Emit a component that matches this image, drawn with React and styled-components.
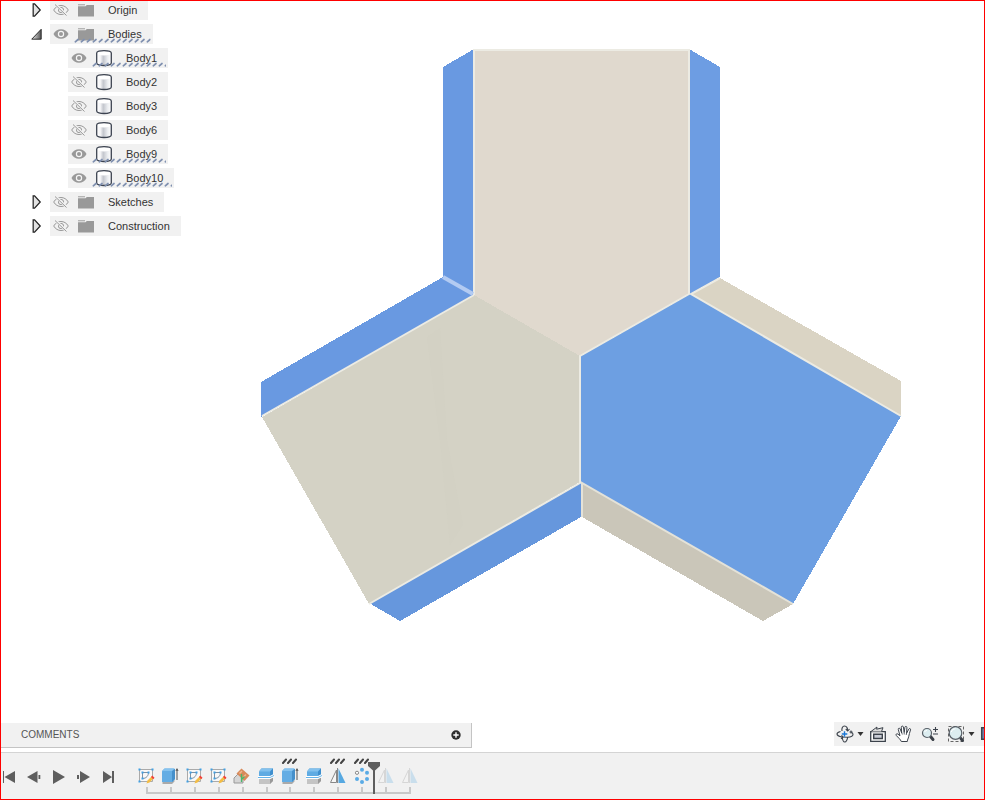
import React from "react";
import styled, { createGlobalStyle } from "styled-components";

const GlobalStyle = createGlobalStyle`
  * { box-sizing: border-box; }
  body { margin: 0; background: #fff; font-family: "Liberation Sans", Arial, sans-serif; font-size: 11px; color: #333; }
  svg { display: block; }
`;

const Window = styled.div`
  display: flex;
  flex-direction: column;
  min-height: 100vh;
  border: 1px solid #f00;
  overflow: hidden;
`;

const Workspace = styled.main`
  flex: 1;
  display: flex;
  min-height: 0;
`;

const IconButton = styled.button`
  display: flex;
  align-items: center;
  justify-content: center;
  flex: none;
  width: ${(p) => p.$w || 16}px;
  height: ${(p) => p.$h || 16}px;
  padding: 0;
  border: 0;
  background: none;
`;

/* ---------- Browser tree ---------- */

const Tree = styled.ul`
  flex: none;
  display: flex;
  flex-direction: column;
  gap: 4px;
  width: 200px;
  margin: -1px 0 0;
  padding: 0 0 0 27px;
  list-style: none;
`;

const TreeRow = styled.li`
  display: flex;
  align-items: center;
  height: 20px;
  padding-left: ${(p) => (p.$child ? 40 : 0)}px;
`;

const TreeCell = styled.div`
  position: relative;
  display: flex;
  align-items: center;
  gap: 8px;
  height: 20px;
  margin-left: ${(p) => (p.$child ? 0 : 6)}px;
  padding: 0 11px 0 3px;
  background: #f1f1f1;
`;

const TreeLabel = styled.span`
  margin-left: 5px;
  line-height: 20px;
  white-space: nowrap;
`;

const HatchLine = styled.svg`
  position: absolute;
  left: 24px;
  bottom: 0;
  width: calc(100% - 26px);
  height: 6px;
`;

function Hatch() {
  const id = React.useId();
  return (
    <HatchLine aria-hidden="true">
      <defs>
        <pattern id={id} width="6" height="6" patternUnits="userSpaceOnUse">
          <path d="M1.300 3.800 4 1.500" stroke="#7f90b0" strokeWidth="1.700" strokeLinecap="round" />
        </pattern>
      </defs>
      <rect width="100%" height="6" fill={`url(#${id})`} />
    </HatchLine>
  );
}

function Disclosure({ open }) {
  return (
    <svg width="17" height="16" viewBox="0 0 17 16">
      <defs>
        <linearGradient id="open-shade" x1="0" x2="1">
          <stop offset="0" stopColor="#eee" />
          <stop offset="1" stopColor="#555" />
        </linearGradient>
      </defs>
      {open ? (
        <path d="M4 13.500 14 3v10.500Z" fill="url(#open-shade)" stroke="#222" />
      ) : (
        <path d="M5.500 1.500H7l6 6.500-6 6.500H5.500Z" fill="#e2e2e2" stroke="#222" strokeWidth="1.300" />
      )}
    </svg>
  );
}

function Eye({ shown }) {
  return shown ? (
    <svg width="16" height="12" viewBox="0 0 16 12">
      <path d="M0.500 6C3 -0.300 13 -0.300 15.500 6 13 12.300 3 12.300 0.500 6Z" fill="#999" />
      <circle cx="8" cy="6" r="3.200" fill="#f5f5f5" />
      <circle cx="8" cy="6" r="2" fill="#999" />
    </svg>
  ) : (
    <svg width="16" height="12" viewBox="0 0 16 12" fill="none" stroke="#999">
      <path d="M0.700 6C4 0 12 0 15.300 6 12 12 4 12 0.700 6Z" />
      <circle cx="8" cy="6" r="2.600" />
      <path d="M2.500 0.500 14 11.500" stroke="#f1f1f1" strokeWidth="2.500" />
      <path d="M2 0.500 13.500 11.500" />
    </svg>
  );
}

function Folder() {
  return (
    <svg width="18" height="16" viewBox="0 0 18 16">
      <path d="M1 2h7v1.400H1Z" fill="#b5b5b5" />
      <path d="M1 4.200h7.500L9.800 3H17v11.500H1Z" fill="#999" />
    </svg>
  );
}

function BodyIcon() {
  return (
    <svg width="18" height="18" viewBox="0 0 18 18">
      <defs>
        <linearGradient id="cyl" x1="0" x2="1">
          <stop offset="0" stopColor="#fff" />
          <stop offset="0.250" stopColor="#f5f5f7" />
          <stop offset="0.450" stopColor="#c3c6cd" />
          <stop offset="0.750" stopColor="#eceef1" />
          <stop offset="1" stopColor="#fff" />
        </linearGradient>
      </defs>
      <path d="M1.700 4v10c0 3.300 14.600 3.300 14.600 0V4" fill="url(#cyl)" />
      <ellipse cx="9" cy="4" rx="7.300" ry="2.500" fill="#fff" />
      <path d="M1.700 4c0-3.300 14.600-3.300 14.600 0v10c0 3.300-14.600 3.300-14.600 0Z" fill="none" stroke="#3c4350" strokeWidth="1.300" />
    </svg>
  );
}

const NODES = [
  { name: "Origin", folder: true },
  { name: "Bodies", folder: true, open: true, shown: true, marked: true },
  { name: "Body1", shown: true, marked: true },
  { name: "Body2" },
  { name: "Body3" },
  { name: "Body6" },
  { name: "Body9", shown: true, marked: true },
  { name: "Body10", shown: true, marked: true },
  { name: "Sketches", folder: true },
  { name: "Construction", folder: true },
];

function TreeNode({ node }) {
  const child = !node.folder;
  return (
    <TreeRow $child={child}>
      {node.folder && (
        <IconButton $w={16} aria-label={`Toggle ${node.name}`} aria-expanded={!!node.open}>
          <Disclosure open={node.open} />
        </IconButton>
      )}
      <TreeCell $child={child}>
        <IconButton aria-label={`Visibility of ${node.name}`} aria-pressed={!!node.shown}>
          <Eye shown={node.shown} />
        </IconButton>
        {node.folder ? <Folder /> : <BodyIcon />}
        <TreeLabel>{node.name}</TreeLabel>
        {node.marked && <Hatch />}
      </TreeCell>
    </TreeRow>
  );
}

/* ---------- Model view ---------- */

const Canvas = styled.div`
  flex: 1;
  display: flex;
  min-width: 0;
`;

const ModelSvg = styled.svg`
  width: 100%;
  height: 100%;
`;

const FACES = [
  ["443,67 474,49 474,295 443,277", "#6999e1"],
  ["689,49 720,67 720,277 690,294", "#6d9de3"],
  ["474,50 689,50 689,294 580,356 474,296", "#e0d9ce"],
  ["443,277 474,295 261,417 261,382", "#6999e1"],
  ["720,278 901,381 901,416 690,294", "#dad4c4"],
  ["369,603 581,482 581,517 400,621", "#6697dd"],
  ["582,483 793,604 763,621 582,517", "#cac6b9"],
  ["474,295 580,356 580,482 369,604 262,417", "#d4d2c5"],
  ["690,294 901,416 793,604 581,483 581,356", "#6d9fe2"],
];

function Model() {
  return (
    <ModelSvg viewBox="201 1 783 721" role="img" aria-label="Three-armed folded body">
      <g shapeRendering="crispEdges">
        {FACES.map(([points, fill]) => (
          <polygon key={points} points={points} fill={fill} />
        ))}
      </g>
      <path d="M427 337 440 328 447 440 463 525 450 545 440 440Z" fill="#d2d0c3" opacity="0.600" />
      <g fill="none" stroke="#ecebe3" strokeWidth="2">
        <path d="M474 295V50H689V294L580 356V483L369 604" />
        <path d="M474 295 262 416" />
        <path d="M720 278 691 294 901 416" />
        <path d="M582 517V483L793 604" stroke="#e4e2d8" />
      </g>
      <path d="M443 277 473 294" stroke="#b3cbf2" strokeWidth="4" />
    </ModelSvg>
  );
}

/* ---------- Comments and navigation ---------- */

const PanelBar = styled.div`
  display: flex;
  justify-content: space-between;
  align-items: flex-start;
  height: 30px;
`;

const Comments = styled.section`
  flex: 0 1 471px;
  display: flex;
  align-items: center;
  justify-content: space-between;
  height: 25px;
  margin-top: 1px;
  padding: 0 7px 0 20px;
  border: solid #c4c4c4;
  border-width: 0 1px 1px 0;
  background: #f1f1f1;
`;

const CommentsTitle = styled.h2`
  margin: 0;
  font: 400 10px/24px "Liberation Sans", Arial, sans-serif;
  color: #555;
`;

const NavBar = styled.nav`
  display: flex;
  align-items: center;
  flex: none;
  width: 150px;
  height: 24px;
  padding-left: 2px;
  overflow: hidden;
  background: #f1f1f1;
`;

const NavGroup = styled.div`
  display: flex;
  align-items: center;
  flex: none;
  margin-right: ${(p) => p.$after || 0}px;
`;

const INK = "#3c434c";

const OrbitIcon = () => (
  <svg width="18" height="18" viewBox="0 0 18 18" fill="none" stroke={INK} strokeWidth="1.100">
    <path d="M6 6C5.500 3.500 6.500 1 8.500 1s3.300 2 3.200 5M6.200 12c.3 3 1.300 5 2.600 5s2.700-2.500 2.800-5" />
    <path d="M4.500 6.500C2.500 7 1 8 1 9s2 2.600 5 3l5.500.2c3-.2 5.500-1.300 5.500-3 0-.700-.5-1.400-1.600-2" />
    <path d="M5.500 10.300 7 12 5 13.800M9.800 4 11.700 6l1.800-2M15 8.500v-3M13.500 7h3" />
    <path d="M8.500 6.200v5.500M5.800 9h5.500" stroke="#1b78d8" strokeWidth="1.400" />
  </svg>
);

const LookAtIcon = () => (
  <svg width="18" height="18" viewBox="0 0 18 18" fill="none" stroke={INK} strokeWidth="1.300">
    <path d="M1.700 6.700h14.600v9.600H1.700Z" fill="#fafafa" />
    <path d="M4.700 9.300h8.600v4.200H4.700Z" fill="#c9ccd6" strokeWidth="1.400" />
    <path d="M2 6.500 8 2l-.4 2.200L14 2.700 12.500 6.500" fill="#ddd" strokeWidth="1" />
  </svg>
);

const HandIcon = () => (
  <svg width="18" height="18" viewBox="0 0 18 18" fill="#fff" stroke={INK} strokeWidth="1" strokeLinejoin="round">
    <path d="M6.300 16.500C5.500 14.300 3 12.500 1.300 10.500c-.9-1.100.4-2.200 1.500-1.500L5 10.800 3.300 4.500c-.3-1.500 1.400-1.900 1.900-.5l1.500 4L6.300 2.300C6.200.8 8.100.6 8.400 2l.8 5.500.7-5.200c.3-1.400 2-1.200 2 .3l-.3 5.600 2.200-4.100c.7-1.200 2.200-.5 1.700.8-1 2.700-1.300 4.600-1.800 6.800-.5 2-1.200 2.600-1.400 4.800Z" />
    <path d="m6.700 7.500.6 2M9.200 7.500v2M11.600 8l-.4 2" strokeWidth="0.800" />
  </svg>
);

const Lens = ({ cx, cy, r, x2, y2 }) => (
  <>
    <path d={`M${cx + r - 1} ${cy + r - 1} ${x2} ${y2}`} stroke="#3b4048" strokeWidth="3" strokeLinecap="round" />
    <circle cx={cx} cy={cy} r={r} fill="#dcedf0" stroke="#596068" strokeWidth="1.200" />
    <path d={`M${cx - r + 2} ${cy - 1}a${r - 2} ${r - 2} 0 0 1 ${r - 2} ${-r + 3}`} fill="none" stroke="#fff" />
  </>
);

const ZoomIcon = () => (
  <svg width="18" height="18" viewBox="0 0 18 18">
    <Lens cx={6} cy={8} r={4.5} x2={12} y2={14.5} />
    <path d="M14.500 2v5M12 4.500h5M12 9h5" stroke={INK} strokeWidth="1.100" />
  </svg>
);

const ZoomWindowIcon = () => (
  <svg width="18" height="18" viewBox="0 0 18 18">
    <path d="M1.500 1.500h15v15h-15Z" fill="none" stroke="#666" strokeDasharray="3 2" />
    <Lens cx={8.5} cy={8} r={6.3} x2={15.5} y2={15.5} />
  </svg>
);

const DisplayIcon = () => (
  <svg width="18" height="18" viewBox="0 0 18 18">
    <path d="M1.700 2.700h14.600v11.600H1.700Z" fill="#6c83ac" stroke={INK} strokeWidth="1.500" />
  </svg>
);

const Caret = () => (
  <svg width="7" height="4" viewBox="0 0 7 4">
    <path d="M0.500 0h6L3.500 4Z" fill="#333" />
  </svg>
);

function Navigation() {
  return (
    <NavBar aria-label="Navigation">
      <NavGroup $after={2}>
        <IconButton $w={18} $h={20} aria-label="Orbit"><OrbitIcon /></IconButton>
        <IconButton $w={13} $h={20} aria-label="Orbit options"><Caret /></IconButton>
      </NavGroup>
      <NavGroup $after={8}>
        <IconButton $w={18} $h={20} aria-label="Look at"><LookAtIcon /></IconButton>
      </NavGroup>
      <NavGroup $after={8}>
        <IconButton $w={18} $h={20} aria-label="Pan"><HandIcon /></IconButton>
      </NavGroup>
      <NavGroup $after={8}>
        <IconButton $w={18} $h={20} aria-label="Zoom"><ZoomIcon /></IconButton>
      </NavGroup>
      <NavGroup $after={2}>
        <IconButton $w={18} $h={20} aria-label="Zoom window"><ZoomWindowIcon /></IconButton>
        <IconButton $w={13} $h={20} aria-label="Zoom window options"><Caret /></IconButton>
      </NavGroup>
      <IconButton $w={18} $h={20} aria-label="Display settings"><DisplayIcon /></IconButton>
    </NavBar>
  );
}

/* ---------- Timeline ---------- */

const Timeline = styled.footer`
  display: flex;
  align-items: flex-start;
  gap: 18px;
  height: 47px;
  border-top: 1px solid #d4d4d4;
  background: #f1f1f1;
`;

const Playback = styled.div`
  display: flex;
  align-items: center;
  gap: 10px;
  height: 47px;
`;

const History = styled.div`
  padding-top: 5px;
`;

const Features = styled.div`
  display: flex;
`;

const Feature = styled.div`
  position: relative;
  display: flex;
  flex-direction: column;
  align-items: center;
  gap: 3px;
  width: 24px;
  opacity: ${(p) => (p.$faded ? 0.25 : 1)};
`;

const GroupMark = styled.svg`
  width: 18px;
  height: 6px;
`;

const Rail = styled.div`
  display: flex;
  justify-content: space-between;
  height: 7px;
  margin: 2px 11px 0 12px;
  border-bottom: 2px solid #c8c8c8;
`;

const Tick = styled.span`
  width: 2px;
  background: #c8c8c8;
`;

const Marker = styled.svg`
  position: absolute;
  top: 4px;
  right: -6px;
`;

const PLAYBACK = [
  ["Go to start", "M2 2h1v12H2ZM14 2v12L3.500 8Z"],
  ["Step back", "M11.500 2v12L1 8ZM12.500 6h1.800v4h-1.800Z"],
  ["Play", "M2 1v14l12-7Z"],
  ["Step forward", "M4 2v12l10-6ZM1 6h2v4H1Z"],
  ["Go to end", "M2 2v12l9-6ZM11 2h2v12h-2Z"],
];

const SketchIcon = () => (
  <svg width="18" height="18" viewBox="0 0 18 18" fill="none">
    <path d="M2.500 2.500h13v12h-13Z" fill="#f8f8f8" stroke="#aaa" />
    <path d="M5.500 11.500v-6h6c0 3-2 6-6 6Z" stroke="#7d93a6" />
    <path d="M1.500 1.500h2v2h-2ZM14.500 1.500h2v2h-2ZM1.500 13.500h2v2h-2ZM4.500 4.500h2v2h-2ZM10.500 4.500h2v2h-2ZM4.500 10.500h2v2h-2Z" fill="#41a0e3" />
    <path d="m9.500 16.500 1-3 4-4 2 2-4 4Z" fill="#f4bd45" />
    <path d="m14 10 1.200-1.400 2.300 2.200-1.300 1.400Z" fill="#f13e38" />
  </svg>
);

const ExtrudeIcon = () => (
  <svg width="18" height="18" viewBox="0 0 18 18">
    <path d="M1.500 14h10l2-1v1.500L11 17H1.500Z" fill="#aaa" />
    <path d="M1 4.500Q1 4 1.500 3.500L3.500 1.500H13l1 1V12l-2.500 3H1Z" fill="#64ade4" />
    <path d="m1.200 4 2.500-2.500h9.800L11 4Z" fill="#86c3ef" />
    <path d="M11 4.200 14 1.800V12l-3 3Z" fill="#4690cb" />
    <path d="M16 3v10M15 4l1-2.300L17 4" stroke="#555" fill="none" />
  </svg>
);

const PlaneIcon = () => (
  <svg width="18" height="18" viewBox="0 0 18 18">
    <path d="M1 11 6 6l4 4.500V16H1Z" fill="#d5d5d5" stroke="#999" />
    <path d="m3.500 6.500 5-5 8 7-5 5.500Z" fill="#d88a5b" />
    <path d="M6.500 6.500 9 4M10 10.500l3-3" stroke="#efb78e" strokeWidth="1.500" />
    <path d="M8.500 7v8M8.500 12.500l3-3" stroke="#48b96b" strokeWidth="1.300" />
  </svg>
);

const SplitIcon = () => (
  <svg width="18" height="18" viewBox="0 0 18 18">
    <path d="M2 4.500 4.500 1.500H16V14l-3 3H2Z" fill="#c4c4c4" />
    <path d="m13 10 3-2v6l-3 3Z" fill="#999" />
    <path d="M2 4.500 4.500 1.500H16V8l-3 1.500H2Z" fill="#5fabe3" />
    <path d="m2 4.500 2.500-3H16l-3 3Z" fill="#82c1ee" />
    <path d="m13 4.500 3-3V8l-3 1.500Z" fill="#3e8fce" />
    <path d="M1 10.500h12l4-2" stroke="#fff" strokeWidth="3" fill="none" />
    <path d="M1 10.500h12l4-2" stroke="#66b4ea" fill="none" />
  </svg>
);

const MirrorIcon = () => (
  <svg width="18" height="18" viewBox="0 0 18 18">
    <path d="M7.500 3v12.500h-6Z" fill="#f6f6f6" stroke="#888" />
    <path d="M9.500 1.500 16.500 16h-7Z" fill="#56a8e1" />
    <path d="M8.500 1v15" stroke="#888" />
  </svg>
);

const PatternIcon = () => (
  <svg width="18" height="18" viewBox="0 0 18 18" fill="#5aabe5">
    <circle cx="9" cy="2.800" r="2" />
    <circle cx="14" cy="5.800" r="2" />
    <circle cx="14" cy="12" r="2" />
    <circle cx="9" cy="15" r="2" />
    <circle cx="4" cy="12" r="2" />
    <circle cx="4" cy="5.800" r="1.600" fill="#fff" stroke="#888" />
  </svg>
);

const FEATURES = [
  { label: "Sketch 1", Icon: SketchIcon },
  { label: "Extrude 1", Icon: ExtrudeIcon },
  { label: "Sketch 2", Icon: SketchIcon },
  { label: "Sketch 3", Icon: SketchIcon },
  { label: "Plane 1", Icon: PlaneIcon },
  { label: "Split body 1", Icon: SplitIcon },
  { label: "Extrude 2", Icon: ExtrudeIcon, marked: true },
  { label: "Split body 2", Icon: SplitIcon },
  { label: "Mirror 1", Icon: MirrorIcon, marked: true },
  { label: "Circular pattern 1", Icon: PatternIcon, marked: true, current: true },
  { label: "Mirror 2", Icon: MirrorIcon, faded: true },
  { label: "Mirror 3", Icon: MirrorIcon, faded: true },
];

export default function App() {
  return (
    <Window>
      <GlobalStyle />
      <Workspace>
        <Tree aria-label="Browser">
          {NODES.map((node) => (
            <TreeNode key={node.name} node={node} />
          ))}
        </Tree>
        <Canvas>
          <Model />
        </Canvas>
      </Workspace>
      <PanelBar>
        <Comments>
          <CommentsTitle>COMMENTS</CommentsTitle>
          <IconButton aria-label="Add comment">
            <svg width="16" height="16" viewBox="0 0 16 16">
              <circle cx="8" cy="8" r="4.700" fill="#2e2e2e" />
              <path d="M8 5.300v5.400M5.300 8h5.400" stroke="#fff" strokeWidth="1.400" />
            </svg>
          </IconButton>
        </Comments>
        <Navigation />
      </PanelBar>
      <Timeline>
        <Playback>
          {PLAYBACK.map(([label, d]) => (
            <IconButton key={label} $w={15} $h={24} aria-label={label}>
              <svg width="15" height="16" viewBox="0 0 15 16">
                <path d={d} fill="#5e5e5e" />
              </svg>
            </IconButton>
          ))}
        </Playback>
        <History>
          <Features>
            {FEATURES.map(({ label, Icon, marked, current, faded }) => (
              <Feature key={label} $faded={faded}>
                <GroupMark viewBox="0 0 18 6" aria-hidden="true">
                  {marked && (
                    <path d="M2 5 5 1.500M7 5l3-3.500M12 5l3-3.500" stroke="#444" strokeWidth="2" strokeLinecap="round" />
                  )}
                </GroupMark>
                <IconButton $w={18} $h={18} aria-label={label}><Icon /></IconButton>
                {current && (
                  <Marker width="12" height="32" viewBox="0 0 12 32" aria-hidden="true">
                    <path d="M0 0h12v4L7 8.500V32H5V8.500L0 4Z" fill="#5e5e5e" />
                  </Marker>
                )}
              </Feature>
            ))}
          </Features>
          <Rail>
            {FEATURES.map(({ label }) => (
              <Tick key={label} />
            ))}
          </Rail>
        </History>
      </Timeline>
    </Window>
  );
}
